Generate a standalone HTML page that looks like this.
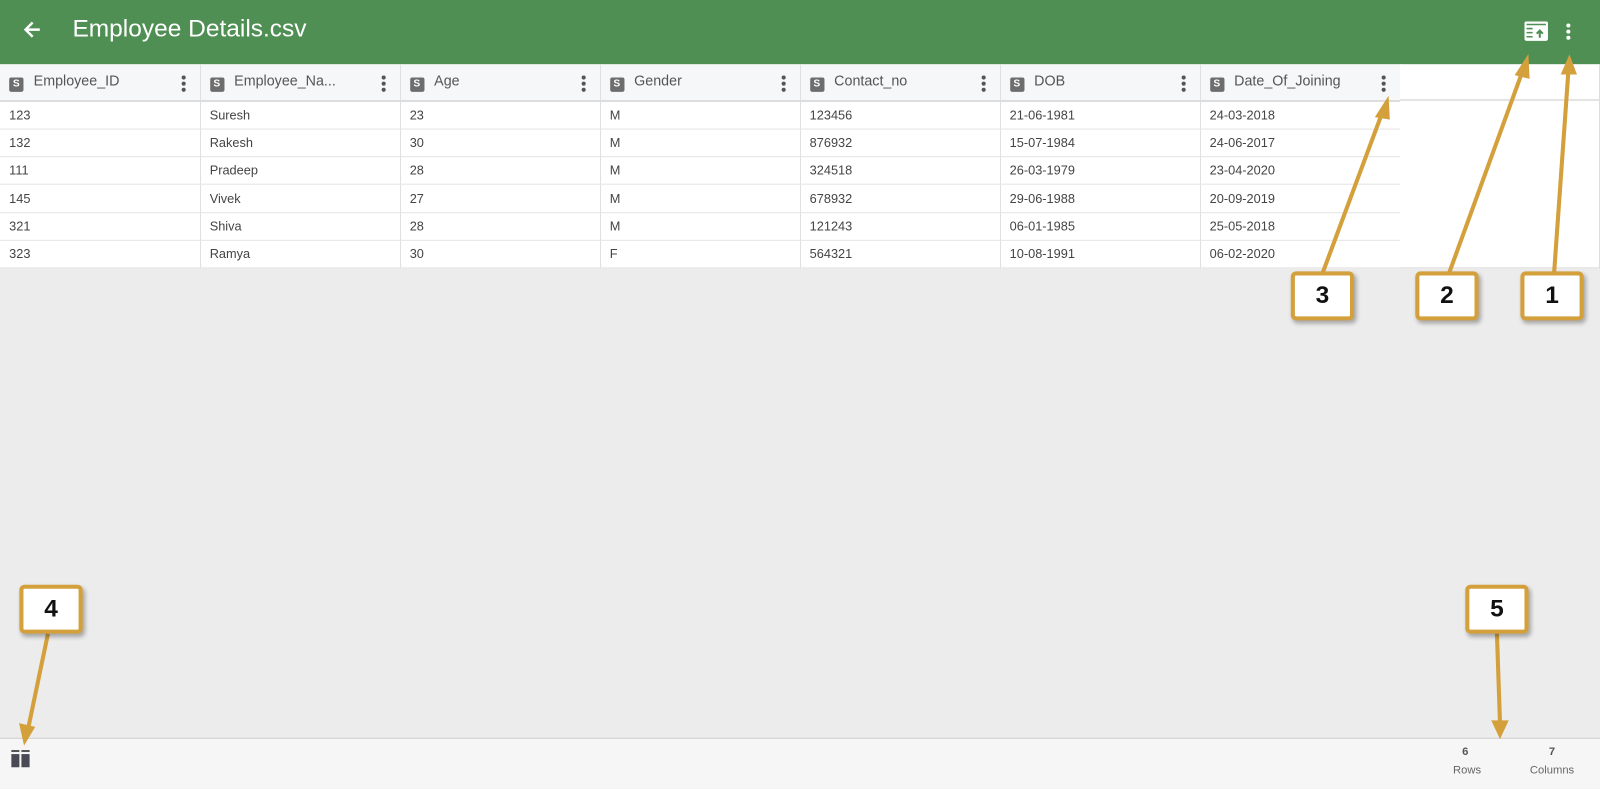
<!DOCTYPE html>
<html><head><meta charset="utf-8"><style>
*{box-sizing:border-box;margin:0;padding:0}
body{width:1600px;height:789px;background:#ececec;font-family:"Liberation Sans",sans-serif;overflow:hidden}
#w{position:absolute;left:0;top:0;width:1568px;height:773px;transform:scale(1.0204);transform-origin:0 0}
.hdr{position:absolute;left:0;top:0;width:1568px;height:63px;background:#4f8f53;color:#fff}
.hdr .t{position:absolute;left:71px;top:15px;font-size:24px}
table{position:absolute;left:0;top:63px;border-collapse:collapse;background:#fff}
td,th{width:196px;border-right:1px solid #e0e0e0;border-bottom:1px solid #e4e4e4;font-size:12.5px;color:#444;text-align:left;font-weight:normal;padding:0 0 0 9px;height:27.3px;position:relative;vertical-align:middle}
th{height:36px;background:#f6f7f8;font-size:14px;color:#555;border-bottom:2px solid #ddd}
th .s{display:inline-block;width:14px;height:14px;background:#6d6d6d;border-radius:2px;color:#fff;font-size:10px;text-align:center;line-height:14px;font-weight:bold;margin-right:10px;vertical-align:-1px}
th .d{position:absolute;right:14px;top:11px;width:4px}
th .d i,.km i{display:block;width:4px;height:4px;border-radius:2px;background:#555;margin-bottom:2px}
.ex{position:absolute;left:1372px;top:63px;width:196px;height:200px;background:#fff;border-right:1px solid #ddd;border-bottom:1px solid #ddd}
.ex div{height:36px;border-bottom:2px solid #e4e4e4}
.ft{position:absolute;left:0;top:723px;width:1568px;height:50px;background:#f6f6f6;border-top:1px solid #ccc}
.box{position:absolute;width:62px;height:48px;background:#fff;border:4px solid #d4a03c;border-radius:5px;box-shadow:2px 3px 4px rgba(0,0,0,.3);font-weight:bold;font-size:24px;text-align:center;line-height:40px;color:#111}
.st{position:absolute;top:731px;text-align:center;font-size:11px;color:#666}
.st b{display:block;font-size:11px;color:#555;margin-bottom:6px}
</style></head><body><div id="w">
<div class="hdr">
<svg style="position:absolute;left:22px;top:19px" width="20" height="20" viewBox="0 0 20 20"><path d="M17 10H4M10 3L3 10l7 7" stroke="#fff" stroke-width="2.4" fill="none"/></svg>
<div class="t">Employee Details.csv</div>
<svg style="position:absolute;left:1494px;top:21px" width="24" height="20" viewBox="0 0 24 20"><rect x="0" y="0" width="23" height="19" rx="2" fill="#fff"/><path d="M2 3h19M2 7h6M2 11h6M2 15h6" stroke="#4f8f53" stroke-width="1.5"/><path d="M15 16v-6M12 12l3-3 3 3" stroke="#4f8f53" stroke-width="2" fill="none"/></svg>
<div class="km" style="position:absolute;left:1535px;top:23px"><i style="background:#fff"></i><i style="background:#fff"></i><i style="background:#fff"></i></div>
</div>
<table>
<tr><th><span class="s">S</span>Employee_ID<span class="d"><i></i><i></i><i></i></span></th><th><span class="s">S</span>Employee_Na...<span class="d"><i></i><i></i><i></i></span></th><th><span class="s">S</span>Age<span class="d"><i></i><i></i><i></i></span></th><th><span class="s">S</span>Gender<span class="d"><i></i><i></i><i></i></span></th><th><span class="s">S</span>Contact_no<span class="d"><i></i><i></i><i></i></span></th><th><span class="s">S</span>DOB<span class="d"><i></i><i></i><i></i></span></th><th><span class="s">S</span>Date_Of_Joining<span class="d"><i></i><i></i><i></i></span></th></tr>
<tr><td>123</td><td>Suresh</td><td>23</td><td>M</td><td>123456</td><td>21-06-1981</td><td>24-03-2018</td></tr>
<tr><td>132</td><td>Rakesh</td><td>30</td><td>M</td><td>876932</td><td>15-07-1984</td><td>24-06-2017</td></tr>
<tr><td>111</td><td>Pradeep</td><td>28</td><td>M</td><td>324518</td><td>26-03-1979</td><td>23-04-2020</td></tr>
<tr><td>145</td><td>Vivek</td><td>27</td><td>M</td><td>678932</td><td>29-06-1988</td><td>20-09-2019</td></tr>
<tr><td>321</td><td>Shiva</td><td>28</td><td>M</td><td>121243</td><td>06-01-1985</td><td>25-05-2018</td></tr>
<tr><td>323</td><td>Ramya</td><td>30</td><td>F</td><td>564321</td><td>10-08-1991</td><td>06-02-2020</td></tr>
</table>
<div class="ex"><div></div></div>
<div class="ft">
<svg style="position:absolute;left:11px;top:11px" width="19" height="17" viewBox="0 0 19 17"><rect x="0" y="0" width="8" height="2" fill="#555"/><rect x="10" y="0" width="8" height="2" fill="#555"/><rect x="0" y="4" width="8" height="13" fill="#4a4a55"/><rect x="10" y="4" width="8" height="13" fill="#4a4a55"/></svg>
</div>
<div class="st" style="left:1424px;width:24px"><b>6</b>Rows</div>
<div class="st" style="left:1494px;width:54px"><b>7</b>Columns</div>
<svg style="position:absolute;left:0;top:0" width="1568" height="773">
<g stroke="#d4a03c" stroke-width="4" fill="#d4a03c">
<line x1="1296" y1="268" x2="1354" y2="112"/><polygon points="1360,97 1349,114 1361,116" stroke-width="2"/>
<line x1="1420" y1="268" x2="1492" y2="70"/><polygon points="1497,56 1486,73 1498,76" stroke-width="2"/>
<line x1="1523" y1="268" x2="1537" y2="70"/><polygon points="1538,56 1531,72 1544,72" stroke-width="2"/>
<line x1="47" y1="621" x2="28" y2="712"/><polygon points="24,728 20,710 33,713" stroke-width="2"/>
<line x1="1467" y1="621" x2="1470" y2="708"/><polygon points="1470,722 1463,707 1477,707" stroke-width="2"/>
</g></svg>
<div class="box" style="left:1265px;top:266px">3</div>
<div class="box" style="left:1387px;top:266px">2</div>
<div class="box" style="left:1490px;top:266px">1</div>
<div class="box" style="left:19px;top:573px">4</div>
<div class="box" style="left:1436px;top:573px">5</div>
</div></body></html>
